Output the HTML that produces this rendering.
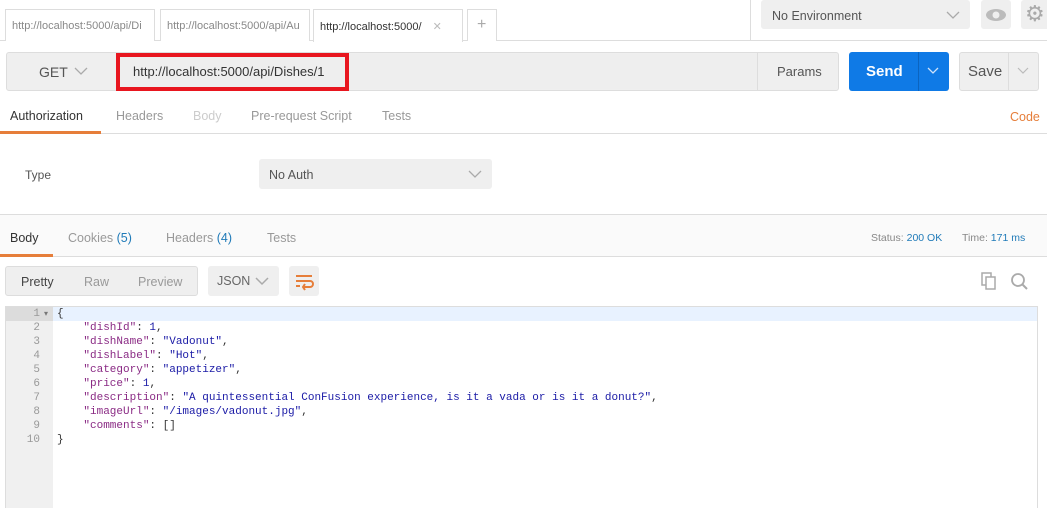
<!DOCTYPE html>
<html><head><meta charset="utf-8"><style>
*{box-sizing:border-box;margin:0;padding:0}
body{width:1047px;height:508px;overflow:hidden;background:#fff;font-family:"Liberation Sans",sans-serif;font-size:12px;color:#505050;position:relative}
.a{position:absolute}
.tab{position:absolute;top:9px;height:32px;border:1px solid #ddd;border-bottom:none;background:#fff;font-size:11px;color:#888;padding:10px 6px;white-space:nowrap;overflow:hidden}
.gray{background:#efefef;border-radius:3px}
.code{font-family:"Liberation Mono",monospace;font-size:11px;line-height:14px;white-space:pre}
.k{color:#8a2a84}.s{color:#1a1aa6}.n{color:#1a1aa6}
</style></head><body>
<div class="a" style="left:0;top:0;width:1047px;height:41px;background:#fff;border-bottom:1px solid #ddd"></div>
<div class="tab" style="left:5px;width:150px">http://localhost:5000/api/Di</div>
<div class="tab" style="left:160px;width:150px">http://localhost:5000/api/Au</div>
<div class="tab" style="left:313px;width:150px;height:33px;color:#333">http://localhost:5000/ <span style="color:#bbb;margin-left:8px">✕</span></div>
<div class="tab" style="left:467px;width:30px;color:#aaa;font-size:16px;padding:6px 9px">+</div>
<div class="a" style="left:750px;top:0;width:1px;height:40px;background:#ddd"></div>
<div class="a gray" style="left:761px;top:0;width:209px;height:29px;padding:9px 11px;color:#555;font-size:12.5px">No Environment</div>
<svg class="a" style="left:946px;top:11px" width="14" height="9"><path d="M1 1l6 6 6-6" stroke="#aaa" stroke-width="1.3" fill="none"/></svg>
<div class="a gray" style="left:981px;top:0;width:30px;height:29px"><svg width="30" height="29"><ellipse cx="15" cy="15" rx="10" ry="6" fill="#bbb"/><circle cx="15" cy="15" r="3.5" fill="#efefef"/></svg></div>
<div class="a gray" style="left:1021px;top:0;width:30px;height:29px;color:#aaa;font-size:22px;padding:1px 4px">⚙</div>

<div class="a" style="left:6px;top:52px;width:833px;height:39px;background:#efefef;border:1px solid #ddd;border-radius:3px"></div>
<div class="a" style="left:39px;top:64px;font-size:14px;color:#555">GET</div>
<svg class="a" style="left:74px;top:67px" width="14" height="9"><path d="M1 1l6 6 6-6" stroke="#aaa" stroke-width="1.3" fill="none"/></svg>
<div class="a" style="left:120px;top:54px;width:637px;height:35px;background:#eee"></div>
<div class="a" style="left:757px;top:53px;width:1px;height:37px;background:#ddd"></div>
<div class="a" style="left:777px;top:64px;font-size:13px;color:#555">Params</div>
<div class="a" style="left:116px;top:53px;width:233px;height:38px;border:4px solid #e8161f"></div>
<div class="a" style="left:133px;top:64px;font-size:13px;color:#333">http://localhost:5000/api/Dishes/1</div>
<div class="a" style="left:849px;top:52px;width:100px;height:39px;background:#0f7ae6;border-radius:3px"></div>
<div class="a" style="left:918px;top:52px;width:1px;height:39px;background:#0b64c0"></div>
<div class="a" style="left:866px;top:63px;font-size:15px;font-weight:bold;color:#fff">Send</div>
<svg class="a" style="left:927px;top:67px" width="12" height="8"><path d="M1 1l5 5 5-5" stroke="#cfe3fa" stroke-width="1.3" fill="none"/></svg>
<div class="a" style="left:959px;top:52px;width:80px;height:39px;background:#efefef;border:1px solid #ddd;border-radius:3px"></div>
<div class="a" style="left:1008px;top:53px;width:1px;height:37px;background:#ddd"></div>
<div class="a" style="left:968px;top:63px;font-size:15px;color:#555">Save</div>
<svg class="a" style="left:1017px;top:67px" width="12" height="8"><path d="M1 1l5 5 5-5" stroke="#bbb" stroke-width="1.2" fill="none"/></svg>

<div class="a" style="left:0;top:133px;width:1047px;height:1px;background:#ddd"></div>
<div class="a" style="left:0;top:131px;width:101px;height:3px;background:#e67e3a"></div>
<div class="a" style="left:10px;top:109px;font-size:12.5px;color:#333">Authorization</div>
<div class="a" style="left:116px;top:109px;font-size:12.5px;color:#999">Headers</div>
<div class="a" style="left:193px;top:109px;font-size:12.5px;color:#ccc">Body</div>
<div class="a" style="left:251px;top:109px;font-size:12.5px;color:#999">Pre-request Script</div>
<div class="a" style="left:382px;top:109px;font-size:12.5px;color:#999">Tests</div>
<div class="a" style="left:1010px;top:110px;font-size:12.5px;color:#e67e3a">Code</div>

<div class="a" style="left:25px;top:168px;font-size:12px;color:#555">Type</div>
<div class="a gray" style="left:259px;top:159px;width:233px;height:30px;padding:9px 10px;color:#555;font-size:12.5px">No Auth</div>
<svg class="a" style="left:468px;top:170px" width="14" height="9"><path d="M1 1l6 6 6-6" stroke="#aaa" stroke-width="1.3" fill="none"/></svg>

<div class="a" style="left:0;top:214px;width:1047px;height:43px;background:#fafafa;border-top:1px solid #ddd;border-bottom:1px solid #ddd"></div>
<div class="a" style="left:0;top:254px;width:53px;height:3px;background:#e67e3a"></div>
<div class="a" style="left:10px;top:231px;font-size:12.5px;color:#333">Body</div>
<div class="a" style="left:68px;top:231px;font-size:12.5px;color:#999">Cookies <span style="color:#1f7ab8">(5)</span></div>
<div class="a" style="left:166px;top:231px;font-size:12.5px;color:#999">Headers <span style="color:#1f7ab8">(4)</span></div>
<div class="a" style="left:267px;top:231px;font-size:12.5px;color:#999">Tests</div>
<div class="a" style="left:871px;top:232px;font-size:10.5px;color:#888">Status: <span style="color:#1f7ab8">200 OK</span></div>
<div class="a" style="left:962px;top:232px;font-size:10.5px;color:#888">Time: <span style="color:#1f7ab8">171 ms</span></div>

<div class="a" style="left:5px;top:266px;width:193px;height:30px;background:#efefef;border:1px solid #ddd;border-radius:3px"></div>
<div class="a" style="left:21px;top:275px;font-size:12.5px;color:#444">Pretty</div>
<div class="a" style="left:84px;top:275px;font-size:12.5px;color:#999">Raw</div>
<div class="a" style="left:138px;top:275px;font-size:12.5px;color:#999">Preview</div>
<div class="a gray" style="left:208px;top:266px;width:71px;height:30px;padding:8px 9px;font-size:12.5px;color:#666">JSON</div>
<svg class="a" style="left:255px;top:277px" width="14" height="9"><path d="M1 1l6 6 6-6" stroke="#aaa" stroke-width="1.5" fill="none"/></svg>
<div class="a gray" style="left:289px;top:266px;width:30px;height:30px"><svg width="30" height="30"><path d="M7 10h16M7 15h14a3 3 0 0 1 0 6h-6M7 20h4M16 18l-2 3 2 3" stroke="#e67e3a" stroke-width="2" fill="none"/></svg></div>
<svg class="a" style="left:980px;top:271px" width="50" height="22"><rect x="2" y="2" width="9" height="12" fill="none" stroke="#aaa" stroke-width="1.5"/><rect x="6" y="6" width="9" height="12" fill="#fff" stroke="#aaa" stroke-width="1.5"/><circle cx="38" cy="9" r="6" fill="none" stroke="#aaa" stroke-width="1.8"/><path d="M42 13l5 5" stroke="#aaa" stroke-width="2"/></svg>

<div class="a" style="left:5px;top:306px;width:1033px;height:202px;border:1px solid #ddd;border-bottom:none"></div>
<div class="a" style="left:6px;top:307px;width:47px;height:201px;background:#f0f0f0"></div>
<div class="a" style="left:6px;top:307px;width:47px;height:14px;background:#dcdcdc"></div>
<div class="a" style="left:53px;top:307px;width:984px;height:14px;background:#e8f2ff"></div>
<div class="a code" style="left:18px;top:307px;color:#999;text-align:right;width:22px"> 1
 2
 3
 4
 5
 6
 7
 8
 9
10</div>
<div class="a" style="left:44px;top:307px;font-size:8px;color:#777;line-height:14px">▾</div>
<div class="a code" style="left:57px;top:307px;color:#333">{
    <span class="k">"dishId"</span>: <span class="n">1</span>,
    <span class="k">"dishName"</span>: <span class="s">"Vadonut"</span>,
    <span class="k">"dishLabel"</span>: <span class="s">"Hot"</span>,
    <span class="k">"category"</span>: <span class="s">"appetizer"</span>,
    <span class="k">"price"</span>: <span class="n">1</span>,
    <span class="k">"description"</span>: <span class="s">"A quintessential ConFusion experience, is it a vada or is it a donut?"</span>,
    <span class="k">"imageUrl"</span>: <span class="s">"/images/vadonut.jpg"</span>,
    <span class="k">"comments"</span>: []
}</div>
</body></html>
